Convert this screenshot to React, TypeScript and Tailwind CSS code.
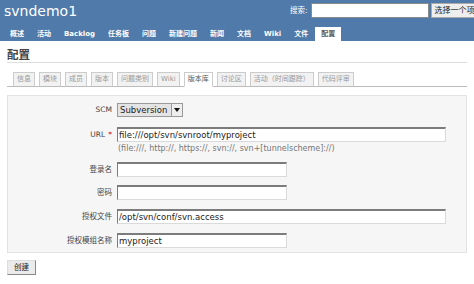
const menu = ["概述", "活动", "Backlog", "任务板", "问题", "新建问题", "新闻", "文档", "Wiki", "文件"];
const tabs = ["信息", "模块", "成员", "版本", "问题类别", "Wiki", "版本库", "讨论区", "活动（时间跟踪）", "代码评审"];

const font = "font-['DejaVu_Sans','Noto_Sans_CJK_SC',sans-serif]";

function TextInput({ value, wide }: { value?: string; wide?: boolean }) {
    return (
        <div className={`${wide ? "w-[329px]" : "w-[170px]"} h-[15px] bg-white border-t-2 border-l border-r border-b border-t-[#7c7c7c] border-l-[#7c7c7c] border-r-[#dadada] border-b-[#dadada] pl-[1px] text-[8.5px] leading-[12px] text-[#222] whitespace-nowrap overflow-hidden`}>
            {value}
        </div>
    );
}

function Row({ label, required, children, className }: { label: string; required?: boolean; children: React.ReactNode; className?: string }) {
    return (
        <div className={`flex items-center ${className ?? ""}`}>
            <div className="w-[105px] text-right text-[7.5px] text-[#444] pr-[1px]">
                {label}
                {required && <span className="text-[#cc0000] ml-[3px]">*</span>}
            </div>
            <div className="ml-[4px]">{children}</div>
        </div>
    );
}

export default function App() {
    return (
        <div className={`w-[474px] h-[284px] overflow-hidden bg-white ${font}`}>
            <div className="bg-[#507aaa] h-[41px] flex flex-col">
                <div className="flex h-[27px]">
                    <div className="w-[290px] shrink-0 pl-[4px] pt-[3px] text-[14px] leading-[16px] text-white">svndemo1</div>
                    <div className="flex shrink-0 items-start pt-[3px]">
                        <span className="text-white text-[7.5px] leading-[15px] mr-[3px]">搜索:</span>
                        <div className="w-[118px] h-[15px] bg-white border border-[#8a8a8a]"></div>
                        <div className="ml-[2px] h-[15px] w-[90px] bg-[#eeeeee] border border-[#aaaaaa] pl-[3px] text-[8px] leading-[13px] text-[#222] whitespace-nowrap">选择一个项目...</div>
                    </div>
                </div>
                <div className="flex items-end h-[14px] pl-[4px] gap-[1px]">
                    {menu.map((m) => (
                        <div key={m} className="px-[6px] h-[14px] text-[7px] leading-[14px] font-bold text-white whitespace-nowrap">{m}</div>
                    ))}
                    <div className="px-[6px] h-[14px] bg-white text-[7px] leading-[14px] font-bold text-[#555]">配置</div>
                </div>
            </div>
            <div className="px-[7px]">
                <h2 className="mt-[7px] h-[15px] text-[11.5px] leading-[14px] font-bold text-[#444] border-b border-[#dddddd]">配置</h2>
                <div className="mt-[9px] flex gap-[4px] border-b border-[#bbbbbb] pl-[6px] h-[15px]">
                    {tabs.map((t) => (
                        <div key={t} className={`px-[3px] h-[15px] border border-[#cccccc] text-[7px] leading-[13px] whitespace-nowrap ${t === "版本库" ? "bg-white border-b-white text-[#555]" : "bg-[#f2f2f2] border-b-[#bbbbbb] text-[#999]"}`}>{t}</div>
                    ))}
                </div>
                <div className="mt-[8px] bg-[#f6f6f6] border border-[#e2e2e2] pt-[7px] pb-[8px] h-[158px]">
                    <Row label="SCM">
                        <div className="flex h-[14px] w-[66px] border border-[#9a9a9a] bg-[#e4e4e4]">
                            <div className="flex-1 pl-[2px] text-[8.5px] leading-[12px] text-[#222]">Subversion</div>
                            <div className="w-[11px] border-l border-[#9a9a9a] bg-[#eeeeee] flex items-center justify-center">
                                <svg width="6" height="4" viewBox="0 0 6 4"><path d="M0 0h6L3 4z" fill="#111" /></svg>
                            </div>
                        </div>
                    </Row>
                    <Row label="URL" required className="mt-[10px]">
                        <TextInput wide value="file:///opt/svn/svnroot/myproject" />
                    </Row>
                    <div className="ml-[110px] mt-[2px] text-[8px] leading-[9px] text-[#777] whitespace-nowrap">(file:///, http://, https://, svn://, svn+[tunnelscheme]://)</div>
                    <Row label="登录名" className="mt-[9px]">
                        <TextInput />
                    </Row>
                    <Row label="密码" className="mt-[8px]">
                        <TextInput />
                    </Row>
                    <Row label="授权文件" className="mt-[9px]">
                        <TextInput wide value="/opt/svn/conf/svn.access" />
                    </Row>
                    <Row label="授权模组名称" className="mt-[9px]">
                        <TextInput value="myproject" />
                    </Row>
                </div>
                <button className="mt-[7px] w-[29px] h-[15px] bg-[#ebebeb] border border-t-[#dddddd] border-l-[#dddddd] border-r-[#888888] border-b-[#888888] text-[7.5px] leading-[13px] text-[#222]">创建</button>
            </div>
        </div>
    );
}
